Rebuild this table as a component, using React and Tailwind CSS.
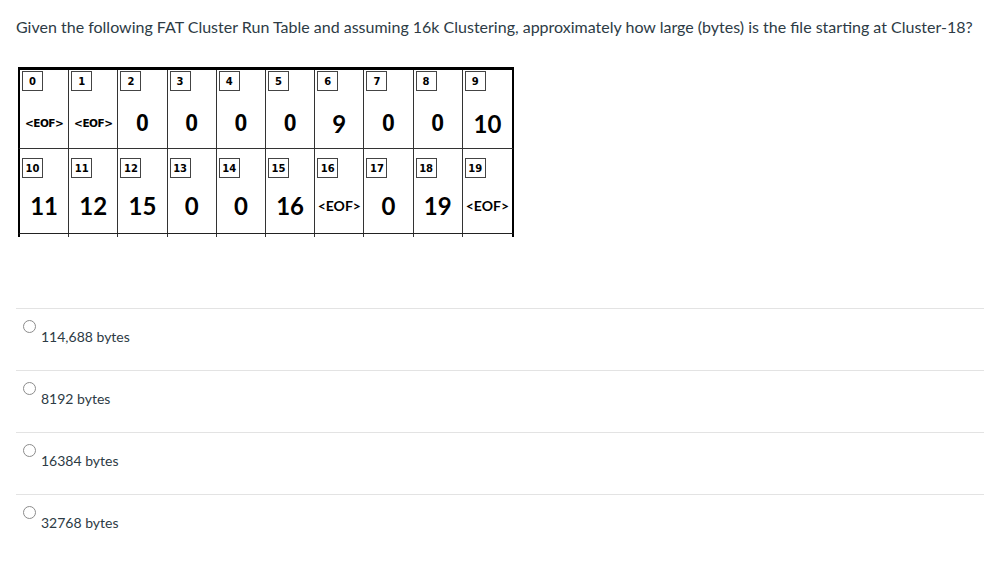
import React from "react";

const row1 = [
  { n: "0", v: "<EOF>", t: "eofs" },
  { n: "1", v: "<EOF>", t: "eofs" },
  { n: "2", v: "0", t: "arial" },
  { n: "3", v: "0", t: "arial" },
  { n: "4", v: "0", t: "arial" },
  { n: "5", v: "0", t: "arial" },
  { n: "6", v: "9", t: "cal" },
  { n: "7", v: "0", t: "arial" },
  { n: "8", v: "0", t: "arial" },
  { n: "9", v: "10", t: "cal" },
];

const row2 = [
  { n: "10", v: "11", t: "cal" },
  { n: "11", v: "12", t: "cal" },
  { n: "12", v: "15", t: "cal" },
  { n: "13", v: "0", t: "cal" },
  { n: "14", v: "0", t: "cal" },
  { n: "15", v: "16", t: "cal" },
  { n: "16", v: "<EOF>", t: "eofl" },
  { n: "17", v: "0", t: "cal" },
  { n: "18", v: "19", t: "cal" },
  { n: "19", v: "<EOF>", t: "eofl" },
];

function Value({ v, t }) {
  if (t === "eofs")
    return (
      <span className="font-['DejaVu_Sans',sans-serif] font-bold text-[10.5px] tracking-[-0.5px] text-black">
        {v}
      </span>
    );
  if (t === "eofl")
    return (
      <span className="font-['Lato',sans-serif] font-bold text-[14px] text-black">
        {v}
      </span>
    );
  if (t === "arial")
    return (
      <span className="font-['Liberation_Sans',sans-serif] font-bold text-[23px] leading-none text-black">
        {v}
      </span>
    );
  return (
    <span className="font-['Lato',sans-serif] font-bold text-[24px] leading-none text-black">
      {v}
    </span>
  );
}

function Cell({ c, last, top }) {
  return (
    <div
      className={
        "flex flex-col " +
        (last ? "" : "border-r border-r-[#333] ") +
        (top ? "h-[78px] pt-[1px]" : "h-[84px] pt-[9px]")
      }
    >
      <div className="pl-[2px]">
        <div className="w-[21px] h-[20px] border border-[#444] flex items-center justify-center font-['DejaVu_Sans',sans-serif] font-bold text-[10px] text-black bg-white">
          {c.n}
        </div>
      </div>
      <div className={"flex-1 flex items-center justify-center " + (top ? "pt-[8px]" : "pb-[0px]")}>
        <Value v={c.v} t={c.t} />
      </div>
    </div>
  );
}

const options = ["114,688 bytes", "8192 bytes", "16384 bytes", "32768 bytes"];

export default function App() {
  return (
    <div className="w-[984px] h-[562px] bg-white overflow-hidden font-['Lato',sans-serif] text-[#2d3b45]">
      <div className="pl-[16px] pt-[15px]">
        <p className="text-[16px] leading-[24px]">
          Given the following FAT Cluster Run Table and assuming 16k Clustering, approximately how large (bytes) is the file starting at Cluster-18?
        </p>
        <div className="mt-[28px] ml-[2px] w-[496px]">
          <div className="border-t-[3px] border-t-black border-l-[2px] border-l-black border-r-[2px] border-r-black border-b border-b-[#333] grid grid-cols-10">
            {row1.map((c, i) => (
              <Cell key={i} c={c} top last={i === 9} />
            ))}
          </div>
          <div className="border-l-[2px] border-l-black border-r-[2px] border-r-black border-b border-b-[#222] grid grid-cols-10">
            {row2.map((c, i) => (
              <Cell key={i} c={c} last={i === 9} />
            ))}
          </div>
          <div className="h-[3px] border-l-[2px] border-l-black border-r-[2px] border-r-black grid grid-cols-10">
            {row2.map((c, i) => (
              <div key={i} className={i === 9 ? "" : "border-r border-r-[#333]"} />
            ))}
          </div>
        </div>
        <div className="mt-[71px]">
          {options.map((o) => (
            <div key={o} className="h-[62px] border-t border-t-[#e3e3e3] pt-[11px] pl-[7px] flex">
              <div className="w-[13px] h-[13px] rounded-full border border-[#8c8c8c] bg-white shrink-0" />
              <div className="ml-[5px] mt-[8px] text-[14px] leading-[18px] text-[#2d3b45]">{o}</div>
            </div>
          ))}
        </div>
      </div>
    </div>
  );
}
